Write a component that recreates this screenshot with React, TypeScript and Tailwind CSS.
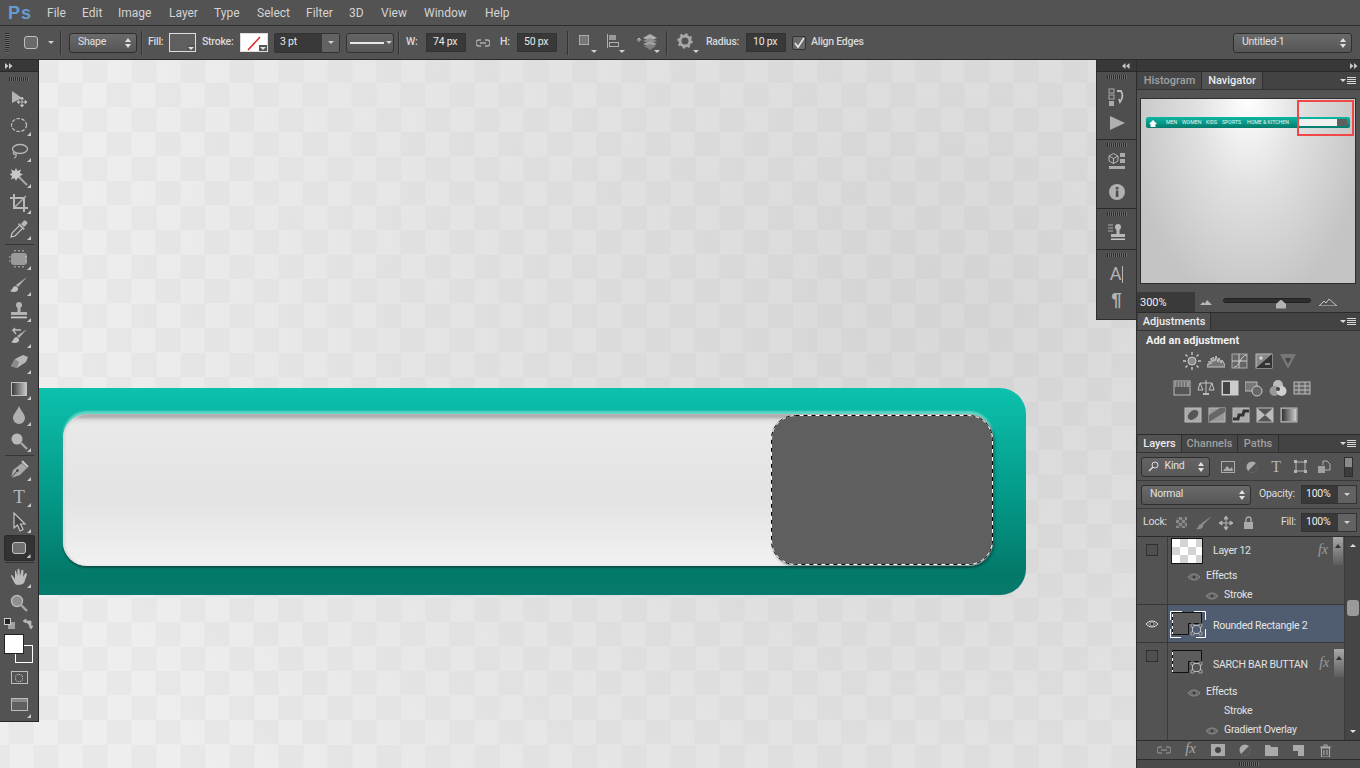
import React from "react";

const F = "#b3b3b3";

function Ic({ w = 20, h = 20, children, className = "" }: { w?: number; h?: number; children: React.ReactNode; className?: string }) {
  return (
    <svg width={w} height={h} viewBox={`0 0 ${w} ${h}`} className={"block shrink-0 " + className}>
      {children}
    </svg>
  );
}

function Grip({ w = "w-[20px]" }: { w?: string }) {
  return <div className={w + " h-[4px] bg-[repeating-linear-gradient(90deg,#2c2c2c_0_1px,#6a6a6a_1px_2px)]"} />;
}

function Caret({ className = "" }: { className?: string }) {
  return <div className={"w-0 h-0 border-x-[3px] border-x-transparent border-t-[3px] border-t-[#d0d0d0] " + className} />;
}

function UpDown() {
  return (
    <div className="flex flex-col gap-[2px]">
      <div className="w-0 h-0 border-x-[3px] border-x-transparent border-b-[4px] border-b-[#e0e0e0]" />
      <div className="w-0 h-0 border-x-[3px] border-x-transparent border-t-[4px] border-t-[#e0e0e0]" />
    </div>
  );
}

function Tool({ children, tri = true, h = "h-[26px]" }: { children: React.ReactNode; tri?: boolean; h?: string }) {
  return (
    <div className={h + " relative flex items-center justify-center w-full"}>
      {children}
      {tri && <div className="absolute right-[7px] bottom-[2px] w-[4px] h-[4px] bg-[#c8c8c8] [clip-path:polygon(100%_0,100%_100%,0_100%)]" />}
    </div>
  );
}

function Select({ label, className = "" }: { label: string; className?: string }) {
  return (
    <div className={"h-[20px] flex items-center justify-between pl-[8px] pr-[5px] rounded-[3px] border border-[#2e2e2e] bg-[linear-gradient(#6a6a6a,#565656)] text-[#e0e0e0] " + className}>
      <span>{label}</span>
      <UpDown />
    </div>
  );
}

function Num({ v, className = "" }: { v: string; className?: string }) {
  return <div className={"h-[19px] flex items-center pl-[6px] bg-[#393939] border border-[#333] text-[#e8e8e8] " + className}>{v}</div>;
}

function Sep() {
  return <div className="w-px h-[24px] bg-[#333] border-r border-r-[#5e5e5e] box-content" />;
}

function PanelMenu() {
  return (
    <div className="flex items-center gap-[1px] mr-[4px]">
      <Caret className="border-t-[#d8d8d8]" />
      <div className="w-[9px] h-[7px] bg-[repeating-linear-gradient(#d8d8d8_0_1px,transparent_1px_2px)]" />
    </div>
  );
}

function Tab({ label, active = false, className = "" }: { label: string; active?: boolean; className?: string }) {
  return (
    <div className={"h-full flex items-center justify-center border-r border-r-[#2f2f2f] font-medium text-[11px] tracking-normal " + (active ? "bg-[#535353] text-[#ececec] " : "bg-[#474747] text-[#a0a0a0] ") + className}>
      {label}
    </div>
  );
}

function TabBar({ children }: { children: React.ReactNode }) {
  return (
    <div className="h-[18px] shrink-0 flex items-stretch bg-[#434343] border-b border-b-[#333] pl-px">
      {children}
      <div className="ml-auto flex items-center"><PanelMenu /></div>
    </div>
  );
}

function Eye({ c = "#8a8a8a" }: { c?: string }) {
  return (
    <Ic w={14} h={10}>
      <path d="M1 5C4 1 10 1 13 5C10 9 4 9 1 5Z" fill="#6a6a6a" stroke={c} strokeWidth="1" />
      <circle cx="7" cy="5" r="2" fill="#3a3a3a" stroke={c} strokeWidth=".6" />
    </Ic>
  );
}

function VisBox() {
  return (
    <div className="w-[31px] h-full shrink-0 border-r border-r-[#3a3a3a] flex justify-center pt-[5px]">
      <div className="w-[12px] h-[12px] mt-[2px] border border-[#303030] bg-[#4f4f4f]" />
    </div>
  );
}

function EffectRow({ label, eye = true, indent }: { label: string; eye?: boolean; indent: string }) {
  return (
    <div className="h-[19px] flex items-center">
      <div className="w-[31px] h-full shrink-0 border-r border-r-[#3a3a3a]" />
      <div className={indent + " flex items-center"}>
        <div className="w-[14px] mr-[5px]">{eye && <Eye />}</div>
        <span className="text-[#e2e2e2]">{label}</span>
      </div>
    </div>
  );
}

function MaskThumb({ selected = false }: { selected?: boolean }) {
  return (
    <svg width="36" height="27" className="block ml-[2px] shrink-0">
      <path d="M2.5 1.5H31.5V12.5H18.5V23.5H2.5Z" fill="#5c5c5c" stroke="#111" strokeWidth="1" />
      <path d="M2.5 3V6M2.5 9V12M2.5 15V18M2.5 21V23" stroke="#fff" strokeWidth="1" />
      <rect x="22.5" y="14.5" width="8" height="8" fill="none" stroke="#bdbdbd" />
      <path d="M21 13H24V16H21ZM29 13H32V16H29ZM21 21H24V24H21ZM29 21H32V24H29Z" fill="#535353" stroke="#bdbdbd" strokeWidth=".7" />
      {selected && <path d="M.5 9V.5H12M24 .5H35.5V9M35.5 18V26.5H26M11 26.5H.5V18" fill="none" stroke="#fff" strokeWidth="1" />}
    </svg>
  );
}

function Swatch({ children, w }: { children: React.ReactNode; w: string }) {
  return <div className={w + " h-[19px] relative border border-[#ddd] overflow-hidden"}>{children}<div className="absolute right-0 bottom-0 w-[8px] h-[6px] bg-[#555] flex items-center justify-center"><Caret className="border-t-[#e0e0e0]" /></div></div>;
}

function FxBar() {
  return (
    <div className="w-[10px] h-[28px] shrink-0 bg-[linear-gradient(#a8a8a8,#5c5c5c)] flex justify-center pt-[7px]">
      <div className="w-0 h-0 border-x-[3px] border-x-transparent border-b-[4px] border-b-[#333]" />
    </div>
  );
}

function AdjBox({ children }: { children: React.ReactNode }) {
  return <Ic w={18} h={18}>{children}</Ic>;
}

function Corner() {
  return <div className="w-[8px] h-[8px] bg-[radial-gradient(#8a8a8a_40%,transparent_45%)] bg-[length:2px_2px] [clip-path:polygon(100%_0,100%_100%,0_100%)]" />;
}

function App() {
  return (
    <div className="w-[1360px] h-[768px] overflow-hidden flex flex-col bg-[#535353] text-[10.5px] tracking-[-0.25px] leading-none font-['Roboto','Noto_Sans',sans-serif] text-[#d8d8d8]">
      {/* Menu bar */}
      <div className="h-[26px] shrink-0 flex items-center border-b border-b-[#2f2f2f]">
        <span className="ml-[8px] w-[39px] text-[#669bd0] text-[18px] tracking-[1px] font-bold font-['Liberation_Sans',sans-serif]">Ps</span>
        <div className="flex text-[12px] tracking-normal text-[#d4d4d4]">
          <span className="w-[35px]">File</span>
          <span className="w-[36px]">Edit</span>
          <span className="w-[51px]">Image</span>
          <span className="w-[45px]">Layer</span>
          <span className="w-[43px]">Type</span>
          <span className="w-[49px]">Select</span>
          <span className="w-[43px]">Filter</span>
          <span className="w-[32px]">3D</span>
          <span className="w-[43px]">View</span>
          <span className="w-[61px]">Window</span>
          <span>Help</span>
        </div>
      </div>

      {/* Options bar */}
      <div className="h-[34px] shrink-0 flex items-center border-b border-b-[#2b2b2b] font-medium">
        <div className="ml-[5px] w-[4px] h-[20px] bg-[repeating-linear-gradient(#2c2c2c_0_1px,#6a6a6a_1px_2px)]" />
        <div className="ml-[15px] w-[14px] h-[13px] rounded-[3px] bg-[#6a6a6a] border border-[#c0c0c0]" />
        <Caret className="ml-[10px] mr-[6px]" />
        <Sep />
        <Select label="Shape" className="ml-[7px] w-[68px] font-normal" />
        <div className="ml-[4px]"><Sep /></div>
        <span className="ml-[5px] w-[21px]">Fill:</span>
        <Swatch w="w-[27px]"><div className="w-full h-full bg-[#5f5f5f]" /></Swatch>
        <span className="ml-[6px] w-[38px]">Stroke:</span>
        <Swatch w="w-[28px]">
          <div className="w-full h-full bg-white">
            <svg width="28" height="19"><path d="M7 16L19 3" stroke="#e02020" strokeWidth="1.5" /></svg>
          </div>
        </Swatch>
        <div className="ml-[6px] w-[66px] h-[20px] flex border border-[#333] rounded-[2px] font-normal">
          <div className="w-[47px] bg-[#393939] flex items-center pl-[5px] text-[#e8e8e8]">3 pt</div>
          <div className="flex-1 bg-[#626262] flex items-center justify-center"><Caret /></div>
        </div>
        <div className="ml-[6px] w-[48px] h-[20px] flex items-center border border-[#333] rounded-[3px] bg-[linear-gradient(#646464,#575757)] pl-[3px]">
          <div className="w-[34px] h-[2px] bg-[#e8e8e8]" />
          <Caret className="ml-[2px]" />
        </div>
        <div className="ml-[4px]"><Sep /></div>
        <span className="ml-[6px] w-[20px]">W:</span>
        <Num v="74 px" className="w-[40px] font-normal" />
        <Ic w={14} h={10} className="ml-[10px]"><path d="M5 2H3a3 3 0 0 0 0 6h2M9 2h2a3 3 0 0 1 0 6H9M4 5h6" fill="none" stroke="#b0b0b0" strokeWidth="1.3" /></Ic>
        <span className="ml-[10px] w-[17px]">H:</span>
        <Num v="50 px" className="w-[40px] font-normal" />
        <div className="ml-[10px]"><Sep /></div>
        <div className="relative ml-[9px] w-[20px] h-[20px]">
          <div className="ml-[1px] mt-[2px] w-[10px] h-[10px] border border-[#aaa] bg-[#777]" />
          <Caret className="absolute right-[1px] bottom-0" />
        </div>
        <div className="relative ml-[8px] w-[20px] h-[20px]">
          <Ic w={16} h={16}><path d="M1.5 1V15" stroke="#b0b0b0" /><rect x="3" y="2" width="7" height="5" fill="#999" /><rect x="3.5" y="9.5" width="9" height="4" fill="none" stroke="#b0b0b0" /></Ic>
          <Caret className="absolute right-[1px] bottom-0" />
        </div>
        <div className="relative ml-[10px] w-[24px] h-[20px]">
          <Ic w={22} h={18}><path d="M3 9V6M1 7.5L3 5L5 7.5" stroke="#c0c0c0" fill="none" /><path d="M7 5L14 1L21 5L14 8Z" fill="#b0b0b0" /><path d="M7 8L14 11L21 8L14 5Z" fill="#8c8c8c" /><path d="M7 11L14 14L21 11L14 8Z" fill="#a0a0a0" /><path d="M8 13L14 17L20 13L14 11Z" fill="#808080" /></Ic>
          <Caret className="absolute right-0 bottom-0" />
        </div>
        <div className="ml-[6px]"><Sep /></div>
        <div className="relative ml-[9px] w-[22px] h-[20px]">
          <Ic w={16} h={16}><circle cx="8" cy="8" r="5" fill="none" stroke="#a8a8a8" strokeWidth="3" /><circle cx="8" cy="8" r="6.6" fill="none" stroke="#a8a8a8" strokeWidth="2.4" strokeDasharray="2.2 3" /></Ic>
          <Caret className="absolute right-0 bottom-0" />
        </div>
        <span className="ml-[7px] w-[40px]">Radius:</span>
        <Num v="10 px" className="w-[40px] font-normal" />
        <div className="ml-[6px] w-[14px] h-[14px] rounded-[2px] border border-[#333] bg-[#6a6a6a] flex items-center justify-center">
          <Ic w={12} h={12}><path d="M2 6L5 10L11 1" fill="none" stroke="#e8e8e8" strokeWidth="1.6" /></Ic>
        </div>
        <span className="ml-[5px]">Align Edges</span>
        <Select label="Untitled-1" className="ml-auto mr-[8px] w-[119px] font-normal" />
      </div>

      {/* Work area */}
      <div className="flex-1 min-h-0 flex">
        <div className="relative w-[1136px] h-full overflow-hidden [background:repeating-conic-gradient(#00000006_0_25%,transparent_0_50%)_33.5px_23px/49px_49px,radial-gradient(circle_at_85%_35%,#d8d8d8,#e2e2e2_40%,#eeeeee_85%)]">
          {/* Artwork */}
          <div className="mt-[328px] w-[1026px] h-[207px] rounded-r-[26px] pl-[63px] pt-[26px] bg-[linear-gradient(#0cc1ad,#0ab8a4_12%,#049786_55%,#03796a_90%,#067a6c)]">
            <div className="w-[930px] h-[152px] rounded-[24px] flex items-center justify-end shadow-[0_-3px_2px_#5fd6c8,0_2px_2px_#0a4f47,inset_2px_0_2px_#dadada] bg-[linear-gradient(#a9a5a5,#b5b2b2_3px,#dcdcdc_6px,#e9e9e9_10px,#e3e3e3_55%,#f1f1f1)]">
              <div className="relative w-[222px] h-[150px] rounded-[24px] bg-[#5f5f5f] shadow-[2px_2px_3px_#0a4f4780]">
                <svg width="222" height="150" className="absolute inset-0">
                  <rect x=".5" y=".5" width="221" height="149" rx="24" fill="none" stroke="#fff" />
                  <rect x=".5" y=".5" width="221" height="149" rx="24" fill="none" stroke="#000" strokeDasharray="4 4" />
                </svg>
              </div>
            </div>
          </div>

          {/* Toolbox */}
          <div className="absolute left-0 top-0 w-[39px] h-[662px] flex flex-col items-center bg-[#535353] border-r border-b border-[#262626] text-[#b3b3b3]">
            <div className="w-full h-[12px] shrink-0 bg-[#383838] border-b border-b-[#2a2a2a] flex items-center pl-[5px] gap-0">
              <Ic w={8} h={6}><path d="M0 0L3.5 3L0 6ZM4 0L7.5 3L4 6Z" fill="#c8c8c8" /></Ic>
            </div>
            <div className="h-[14px] shrink-0 flex items-center"><Grip /></div>
            <Tool tri={false}><Ic><path d="M3 2L13 9L3 14Z" fill={F} /><path d="M13 9V17M9 13H17M13 8L11.5 10H14.5ZM13 18L11.5 16H14.5ZM8 13L10 11.5V14.5ZM18 13L16 11.5V14.5Z" stroke="#c8c8c8" strokeWidth=".8" fill="#c8c8c8" /></Ic></Tool>
            <Tool><Ic><ellipse cx="10" cy="10" rx="7.5" ry="6.5" fill="none" stroke="#c0c0c0" strokeWidth="1.2" strokeDasharray="3.5 1.5" /></Ic></Tool>
            <Tool><Ic><ellipse cx="11" cy="8" rx="7.5" ry="4.5" fill="none" stroke="#b8b8b8" strokeWidth="1.3" /><path d="M5 11C3 13 6 14 7 13C8 15 6 17 5 17" fill="none" stroke="#b8b8b8" strokeWidth="1.2" /></Ic></Tool>
            <Tool><Ic><path d="M7 1L8.5 4L12 2.5L10.8 6L14 7.5L10.8 9L12 12L8.5 11L7 14L5.5 11L2 12.5L3.2 9L0.5 7.5L3.2 6L2 2.5L5.5 4Z" fill="#c8c8c8" /><path d="M10 10L18 18" stroke="#a8a8a8" strokeWidth="2" /></Ic></Tool>
            <Tool><Ic><path d="M5 1V15H19M1 5H15V19" fill="none" stroke="#b8b8b8" strokeWidth="2" /><path d="M6 14L17 3" stroke="#b8b8b8" strokeWidth="1.2" /></Ic></Tool>
            <Tool><Ic><path d="M2 18L3 14L11 6L14 9L6 17Z" fill="#555" stroke="#c8c8c8" strokeWidth="1.1" /><path d="M10 4L16 10L14.5 11L9 5.5ZM12 5L15 1.5Q18 1 18.5 4.5L15 8Z" fill="#b8b8b8" /></Ic></Tool>
            <div className="h-[4px] w-full flex items-center justify-center shrink-0"><div className="w-[29px] h-px bg-[#363636]" /></div>
            <Tool><Ic><rect x="2" y="4" width="16" height="12" rx="3" fill="#9a9a9a" /><path d="M6 1V19M10 1V19M14 1V19M0 8H20M0 12H20" stroke="#c8c8c8" strokeDasharray="1.5 14.5" strokeWidth="1.2" /></Ic></Tool>
            <Tool><Ic><path d="M18 2L9 12L7 10Z" fill="#b4b4b4" /><path d="M7 11C3 11 4 15 1 16C4 18 10 17 9 13Z" fill="#c0c0c0" /></Ic></Tool>
            <Tool><Ic><circle cx="10" cy="4" r="3" fill="#b4b4b4" /><rect x="8.5" y="6" width="3" height="5" fill="#b4b4b4" /><rect x="2" y="11" width="16" height="3" fill="#b4b4b4" /><rect x="2" y="15.5" width="16" height="1.8" fill="#c8c8c8" /></Ic></Tool>
            <Tool><Ic><path d="M18 2L10 11L8 9Z" fill="#b4b4b4" /><path d="M8 10C4 10 5 14 2 15C5 17 11 16 10 12Z" fill="#c0c0c0" /><path d="M12 3H4L6 1M4 3L7 7" fill="none" stroke="#c0c0c0" strokeWidth="1.3" /></Ic></Tool>
            <Tool><Ic><path d="M6 6L14 2L19 4L17 9L8 15L2 13Z" fill="#b8b8b8" /><path d="M2 13L6 6L10 9L8 15Z" fill="#8a8a8a" /></Ic></Tool>
            <Tool><div className="w-[16px] h-[14px] border border-[#c0c0c0] bg-[linear-gradient(90deg,#3c3c3c,#c4c4c4)]" /></Tool>
            <Tool><Ic><path d="M10 1C12 6 16 9 16 13A6 6 0 0 1 4 13C4 9 8 6 10 1Z" fill="#b0b0b0" /></Ic></Tool>
            <Tool><Ic><circle cx="8" cy="8" r="5.5" fill="#b8b8b8" /><path d="M12 12L18 18" stroke="#a8a8a8" strokeWidth="2.4" /></Ic></Tool>
            <div className="h-[3px] w-full flex items-center justify-center shrink-0"><div className="w-[29px] h-px bg-[#363636]" /></div>
            <Tool><Ic><path d="M2 18L4 10L13 3L18 8L11 15Z" fill="#a8a8a8" /><path d="M2 18L8 11" stroke="#444" strokeWidth="1" /><circle cx="8.5" cy="10.5" r="1.3" fill="#444" /><path d="M13 1L19 7" stroke="#c8c8c8" strokeWidth="2" /></Ic></Tool>
            <Tool><span className="text-[19px] text-[#b8b8b8] font-['Liberation_Serif',serif]">T</span></Tool>
            <Tool><Ic><path d="M5 1V16L8.5 13L11 19L14 17.5L11.5 12L16 12Z" fill="#444" stroke="#c4c4c4" strokeWidth="1.2" /></Ic></Tool>
            <div className="h-[26px] w-[31px] shrink-0 relative flex items-center justify-center rounded-[2px] bg-[#333] border border-[#2c2c2c]">
              <div className="w-[14px] h-[12px] rounded-[3px] bg-[#6e6e6e] border border-[#c4c4c4]" />
              <div className="absolute right-[3px] bottom-[2px] w-[4px] h-[4px] bg-[#c8c8c8] [clip-path:polygon(100%_0,100%_100%,0_100%)]" />
            </div>
            <div className="h-[3px] w-full flex items-center justify-center shrink-0"><div className="w-[29px] h-px bg-[#363636]" /></div>
            <Tool><Ic><path d="M3 8L6 12V4.5Q6 3 7 4L8.5 9V2.5Q9.5 1 10.5 2.5L11 9L12.5 3Q14 2 14.5 4L14 10L16.5 6Q18 6 18 7.5L15 16Q13 18 9 18Q6 18 5 15L2 9Q2 7.5 3 8Z" fill="#bcbcbc" /></Ic></Tool>
            <Tool tri={false}><Ic><circle cx="8" cy="8" r="5.5" fill="#8f8f8f" stroke="#b8b8b8" strokeWidth="1.4" /><path d="M12 12L18 18" stroke="#a8a8a8" strokeWidth="2.4" /></Ic></Tool>
            <div className="h-[14px] w-full flex items-center justify-between px-[4px] shrink-0">
              <Ic w={11} h={11}><rect x="4" y="4" width="7" height="7" fill="#a0a0a0" /><rect x=".5" y=".5" width="6" height="6" fill="#222" stroke="#ccc" /></Ic>
              <Ic w={11} h={11}><path d="M2 3H8V9M0 3L3 1V5ZM8 11L6 8H10Z" fill="#bbb" stroke="#bbb" strokeWidth=".7" /></Ic>
            </div>
            <div className="relative w-full h-[35px] shrink-0">
              <div className="absolute left-[15px] top-[15px] w-[18px] h-[18px] bg-[#535353] border border-white" />
              <div className="absolute left-[4px] top-[4px] w-[20px] h-[20px] bg-white border border-[#222]" />
            </div>
            <div className="h-[21px] flex items-center shrink-0 mt-[2px]">
              <div className="w-[17px] h-[13px] border border-[#bdbdbd] flex items-center justify-center">
                <div className="w-[8px] h-[8px] rounded-full border border-dotted border-[#ddd]" />
              </div>
            </div>
            <Tool h="h-[32px]"><div className="w-[17px] h-[13px] border border-[#bdbdbd] bg-[linear-gradient(#8a8a8a_30%,#5f5f5f_30%)]" /></Tool>
          </div>

          {/* Floating dock column */}
          <div className="absolute right-0 top-0 w-[40px] h-[260px] flex flex-col items-center bg-[#4e4e4e] border-l border-[#2e2e2e] border-b">
            <div className="w-full h-[12px] shrink-0 bg-[#383838] border-b border-b-[#2a2a2a] flex items-center justify-end pr-[6px]">
              <Ic w={8} h={6}><path d="M3.5 0L0 3L3.5 6ZM7.5 0L4 3L7.5 6Z" fill="#c8c8c8" /></Ic>
            </div>
            <div className="w-full h-[68px] shrink-0 flex flex-col items-center border-b border-[#2a2a2a] pt-[3px]">
              <Grip />
              <div className="mt-[9px]"><Ic w={20} h={18}><rect x="2" y="1" width="5" height="4" fill="none" stroke="#aaa" /><rect x="2" y="7" width="5" height="4" fill="none" stroke="#aaa" /><rect x="2" y="13" width="5" height="5" fill="#aaa" /><path d="M10 3H14C16 6 16 10 13 14L12 11" fill="none" stroke="#bbb" strokeWidth="1.8" /></Ic></div>
              <div className="mt-[9px]"><Ic w={18} h={16}><path d="M2 1L17 8L2 15Z" fill="#b0b0b0" /></Ic></div>
            </div>
            <div className="w-full h-[69px] shrink-0 flex flex-col items-center border-b border-[#2a2a2a] pt-[3px]">
              <Grip />
              <div className="mt-[5px]"><Ic w={18} h={20}><path d="M1 4L5.5 1.5L10 4V9L5.5 11.5L1 9ZM1 4L5.5 6.5L10 4M5.5 6.5V11.5" fill="none" stroke="#b8b8b8" /><rect x="12" y="1" width="5" height="4" fill="#aaa" /><rect x="12" y="7" width="5" height="4" fill="#aaa" /><rect x="1" y="14" width="16" height="3" fill="#aaa" /></Ic></div>
              <div className="mt-[11px]"><Ic w={18} h={18}><circle cx="9" cy="9" r="8" fill="#b0b0b0" /><rect x="7.8" y="7.5" width="2.6" height="6.5" fill="#4e4e4e" /><rect x="7.8" y="4" width="2.6" height="2.5" fill="#4e4e4e" /></Ic></div>
            </div>
            <div className="w-full h-[41px] shrink-0 flex flex-col items-center border-b border-[#2a2a2a] pt-[3px]">
              <Grip />
              <div className="mt-[7px]"><Ic w={20} h={20}><path d="M1 2H6M1 5H6M1 8H6" stroke="#aaa" strokeWidth="1.2" /><circle cx="11" cy="4" r="3" fill="#b8b8b8" /><rect x="9.5" y="6" width="3" height="5" fill="#b8b8b8" /><rect x="4" y="11" width="14" height="3" fill="#b8b8b8" /><rect x="4" y="15.5" width="14" height="1.5" fill="#c8c8c8" /></Ic></div>
            </div>
            <div className="w-full flex-1 flex flex-col items-center pt-[3px]">
              <Grip />
              <div className="mt-[6px] flex items-end h-[20px] text-[#b4b4b4] text-[18px]">A<span className="w-px h-[17px] bg-[#b4b4b4] ml-px" /></div>
              <div className="mt-[7px] text-[#b4b4b4] text-[19px] font-bold font-['Liberation_Sans',sans-serif]">¶</div>
            </div>
          </div>
        </div>

        {/* Right panels */}
        <div className="w-[224px] h-full shrink-0 flex flex-col border-l border-l-[#2e2e2e] text-[#e0e0e0]">
          <div className="h-[12px] shrink-0 bg-[#383838] border-b border-b-[#2a2a2a] flex items-center justify-end pr-[2px]">
            <Ic w={8} h={6}><path d="M0 0L3.5 3L0 6ZM4 0L7.5 3L4 6Z" fill="#c8c8c8" /></Ic>
          </div>
          {/* Navigator */}
          <div className="h-[241px] shrink-0 flex flex-col border-b border-b-[#2b2b2b]">
            <TabBar>
              <Tab label="Histogram" className="w-[64px]" />
              <Tab label="Navigator" active className="w-[61px]" />
            </TabBar>
            <div className="flex-1 px-[3px] pt-[8px]">
              <div className="relative w-[216px] h-[186px] border border-[#2e2e2e] pt-[18px] px-[5px] bg-[radial-gradient(ellipse_at_50%_0%,#ffffff,#e0e0e0_35%,#c4c4c4_80%)]">
                <div className="h-[11px] rounded-[2px] flex items-center pl-[3px] pr-[3px] bg-[linear-gradient(#0bb8a4,#047a6c)] text-[#e8f4f2] text-[5.2px] tracking-normal whitespace-nowrap">
                  <Ic w={8} h={8}><path d="M4 1L8 5H6.5V8H1.5V5H0Z" fill="#fff" /></Ic>
                  <span className="ml-[9px] w-[16px]">MEN</span>
                  <span className="w-[24px]">WOMEN</span>
                  <span className="w-[16px]">KIDS</span>
                  <span className="w-[25px]">SPORTS</span>
                  <span>HOME &amp; KITCHEN</span>
                  <div className="ml-auto w-[48px] h-[7px] rounded-[1px] bg-[linear-gradient(90deg,#f0f0f0_79%,#5f5f5f_79%)]" />
                </div>
                <div className="absolute left-[156px] top-[1px] w-[57px] h-[36px] border-2 border-[#f04848]" />
              </div>
            </div>
            <div className="h-[20px] shrink-0 flex items-center">
              <div className="w-[58px] h-full bg-[#3a3a3a] flex items-center pl-[3px] text-[#f0f0f0] text-[11px] tracking-normal">300%</div>
              <Ic w={12} h={6} className="ml-[5px]"><path d="M0 6L3 3L5 4.5L7 1L12 6Z" fill="#b8b8b8" /></Ic>
              <div className="relative ml-[11px] mb-[4px] w-[88px] h-[5px] rounded-[3px] bg-[#2e2e2e] border border-[#222]">
                <div className="absolute left-[52px] top-[1px] w-[10px] h-[9px] bg-[#b4b4b4] [clip-path:polygon(50%_0,100%_50%,100%_100%,0_100%,0_50%)]" />
              </div>
              <Ic w={18} h={8} className="ml-[8px]"><path d="M0 8L5 3L7 5L10 1L18 8Z" fill="none" stroke="#c8c8c8" /></Ic>
              <div className="ml-auto mr-[2px] mt-[6px]"><Corner /></div>
            </div>
          </div>

          {/* Adjustments */}
          <div className="h-[122px] shrink-0 flex flex-col border-b border-b-[#2b2b2b]">
            <TabBar><Tab label="Adjustments" active className="w-[73px]" /></TabBar>
            <div className="pl-[9px] pt-[4px] font-bold text-[11px] tracking-normal text-[#f0f0f0]">Add an adjustment</div>
            <div className="flex flex-col items-center gap-[9px] mt-[6px]">
              <div className="flex gap-[6px] mr-[17px]">
                <AdjBox><circle cx="9" cy="9" r="4" fill="#888" stroke="#ccc" /><path d="M9 0V3M9 15V18M0 9H3M15 9H18M2.5 2.5L4.5 4.5M13.5 13.5L15.5 15.5M2.5 15.5L4.5 13.5M13.5 4.5L15.5 2.5" stroke="#c8c8c8" strokeWidth="1.4" /></AdjBox>
                <AdjBox><path d="M0 15V12L2 13V9L4 12V6L6 10V5L8 9L9 4L11 10L12 6L14 11L15 8L18 13V15Z" fill="#777" stroke="#c4c4c4" strokeWidth="1" /></AdjBox>
                <AdjBox><rect x="1" y="2" width="15" height="14" fill="#666" stroke="#aaa" /><path d="M1 9H16M8 2V16M3 15C9 15 9 3 16 3" fill="none" stroke="#ccc" /></AdjBox>
                <AdjBox><rect x="1" y="2" width="16" height="14" fill="#888" stroke="#bbb" /><path d="M1 16L17 2V16Z" fill="#333" /><path d="M4 6H8M6 4V8M10 12H15" stroke="#eee" /></AdjBox>
                <AdjBox><path d="M1 2H17L9 17Z" fill="#777" /><path d="M6 6H12L9 12Z" fill="#444" /></AdjBox>
              </div>
              <div className="flex gap-[6px] mr-[14px]">
                <AdjBox><rect x="1" y="2" width="16" height="14" fill="#555" stroke="#bbb" /><rect x="2" y="3" width="14" height="5" fill="#999" /><path d="M4 3V8M7 3V8M10 3V8M13 3V8" stroke="#555" /></AdjBox>
                <AdjBox><path d="M9 1V15M3 4H15M3 4L1 11H6ZM15 4L12 11H17Z" fill="none" stroke="#c4c4c4" /><rect x="6" y="14" width="6" height="2" fill="#bbb" /></AdjBox>
                <AdjBox><rect x="1" y="2" width="16" height="14" fill="#ccc" stroke="#ccc" /><rect x="2" y="3" width="7" height="12" fill="#444" /></AdjBox>
                <AdjBox><rect x="0" y="3" width="12" height="9" fill="#777" stroke="#bbb" /><circle cx="12" cy="12" r="5" fill="#666" stroke="#ccc" /></AdjBox>
                <AdjBox><circle cx="9" cy="6" r="5" fill="#bbb" /><circle cx="5.5" cy="12" r="5" fill="#999" /><circle cx="12.5" cy="12" r="5" fill="#d0d0d0" /><circle cx="9" cy="10" r="2" fill="#444" /></AdjBox>
                <AdjBox><rect x="1" y="3" width="16" height="12" fill="#666" stroke="#bbb" /><path d="M1 7H17M1 11H17M6 3V15M12 3V15" stroke="#bbb" /></AdjBox>
              </div>
              <div className="flex gap-[6px] mr-[16px]">
                <AdjBox><rect x="1" y="2" width="16" height="14" fill="#aaa" stroke="#bbb" /><ellipse cx="9" cy="9" rx="6" ry="4" transform="rotate(-40 9 9)" fill="#555" /></AdjBox>
                <AdjBox><rect x="1" y="2" width="16" height="14" fill="#999" stroke="#bbb" /><path d="M1 16L17 6V2H12L1 9Z" fill="#666" /></AdjBox>
                <AdjBox><rect x="1" y="2" width="16" height="14" fill="#aaa" stroke="#bbb" /><path d="M1 13L6 13L7 9H11L12 5H17" stroke="#333" strokeWidth="3" fill="none" /></AdjBox>
                <AdjBox><rect x="1" y="2" width="16" height="14" fill="#555" stroke="#bbb" /><path d="M1 2L9 9L1 16ZM17 2L9 9L17 16Z" fill="#bbb" /></AdjBox>
                <AdjBox><rect x="1" y="2" width="16" height="14" fill="#888" stroke="#bbb" /><rect x="2" y="3" width="14" height="12" fill="url(#ag)" /><defs><linearGradient id="ag"><stop offset="0" stopColor="#333" /><stop offset="1" stopColor="#ccc" /></linearGradient></defs></AdjBox>
              </div>
            </div>
          </div>

          {/* Layers */}
          <div className="flex-1 min-h-0 flex flex-col">
            <TabBar>
              <Tab label="Layers" active className="w-[44px]" />
              <Tab label="Channels" className="w-[56px]" />
              <Tab label="Paths" className="w-[41px]" />
            </TabBar>
            <div className="h-[28px] shrink-0 flex items-center pl-[4px] border-b border-b-[#3a3a3a]">
              <div className="w-[70px] h-[20px] flex items-center justify-between pl-[6px] pr-[5px] rounded-[3px] border border-[#2e2e2e] bg-[linear-gradient(#646464,#585858)] text-[#e0e0e0]">
                <Ic w={11} h={11}><circle cx="7" cy="4" r="3" fill="none" stroke="#ddd" /><path d="M5 6L1 10" stroke="#ddd" strokeWidth="1.4" /></Ic>
                <span className="mr-[8px]">Kind</span>
                <UpDown />
              </div>
              <div className="flex items-center ml-[6px]">
                <div className="w-[24px] flex justify-center"><Ic w={14} h={12}><rect x=".5" y=".5" width="13" height="11" fill="#555" stroke="#aaa" /><path d="M2 10L6 5L9 8L11 6L12 10Z" fill="#aaa" /></Ic></div>
                <div className="w-[24px] flex justify-center"><Ic w={12} h={12}><circle cx="6" cy="6" r="5.5" fill="#aaa" /><path d="M10 2L2 10A5.5 5.5 0 0 0 10 2Z" fill="#555" /></Ic></div>
                <div className="w-[24px] flex justify-center text-[16px] text-[#b4b4b4] font-['Liberation_Serif',serif]">T</div>
                <div className="w-[24px] flex justify-center"><Ic w={13} h={13}><rect x="2" y="2" width="9" height="9" fill="none" stroke="#b4b4b4" /><path d="M0 0H3V3H0ZM10 0H13V3H10ZM0 10H3V13H0ZM10 10H13V13H10Z" fill="#b4b4b4" /></Ic></div>
                <div className="w-[24px] flex justify-center"><Ic w={13} h={13}><path d="M5 5V1H9L12 4V10H7" fill="none" stroke="#b4b4b4" /><rect x="0" y="6" width="7" height="7" fill="#a0a0a0" /></Ic></div>
                <div className="w-[24px] flex justify-center"><div className="w-[9px] h-[20px] border border-[#2e2e2e] bg-[linear-gradient(#8a8a8a_50%,#3c3c3c_50%)]" /></div>
              </div>
            </div>
            <div className="h-[28px] shrink-0 flex items-center pl-[4px] border-b border-b-[#3a3a3a]">
              <Select label="Normal" className="w-[110px]" />
              <span className="ml-[8px] w-[42px] text-[#dcdcdc]">Opacity:</span>
              <div className="w-[56px] h-[19px] flex border border-[#333]">
                <div className="w-[36px] bg-[#393939] flex items-center pl-[4px] text-[#eee]">100%</div>
                <div className="flex-1 bg-[#626262] flex items-center justify-center"><Caret /></div>
              </div>
            </div>
            <div className="h-[28px] shrink-0 flex items-center pl-[6px] border-b border-b-[#2c2c2c]">
              <span className="w-[33px] text-[#dcdcdc]">Lock:</span>
              <div className="w-[11px] h-[11px] bg-[conic-gradient(#8a8a8a_25%,#5e5e5e_0_50%,#8a8a8a_0_75%,#5e5e5e_0)] bg-[length:6px_6px]" />
              <Ic w={17} h={14} className="ml-[9px]"><path d="M16 0L7 9L5 7.5ZM5 8C2 8 3 12 0 13C4 14 8 12 7 9Z" fill="#8c8c8c" /></Ic>
              <Ic w={14} h={14} className="ml-[6px]"><path d="M7 0V14M0 7H14M7 0L5 3H9ZM7 14L5 11H9ZM0 7L3 5V9ZM14 7L11 5V9Z" stroke="#b0b0b0" fill="#b0b0b0" /></Ic>
              <Ic w={11} h={13} className="ml-[10px]"><rect x="1" y="6" width="9" height="7" fill="#aaa" /><path d="M3 6V3.5a2.5 2.5 0 0 1 5 0V6" fill="none" stroke="#aaa" strokeWidth="1.4" /></Ic>
              <span className="ml-[27px] w-[20px] text-[#dcdcdc]">Fill:</span>
              <div className="w-[56px] h-[19px] flex border border-[#333]">
                <div className="w-[36px] bg-[#393939] flex items-center pl-[4px] text-[#eee]">100%</div>
                <div className="flex-1 bg-[#626262] flex items-center justify-center"><Caret /></div>
              </div>
            </div>

            <div className="flex-1 min-h-0 flex overflow-hidden">
              <div className="flex-1 min-w-0 flex flex-col">
                <div className="h-[68px] shrink-0 border-b border-b-[#363636]">
                  <div className="h-[30px] flex">
                    <VisBox />
                    <div className="ml-[3px] mt-px w-[32px] h-[26px] border border-[#111] bg-[conic-gradient(#d4d4d4_25%,#fff_0_50%,#d4d4d4_0_75%,#fff_0)] bg-[length:16px_16px]" />
                    <span className="ml-[10px] mt-[9px] text-[#e2e2e2] w-[105px] whitespace-nowrap">Layer 12</span>
                    <span className="mt-[6px] w-[15px] italic text-[14px] text-[#9c9c9c] font-['Liberation_Serif',serif]">fx</span>
                    <FxBar />
                  </div>
                  <EffectRow label="Effects" indent="ml-[19px]" />
                  <EffectRow label="Stroke" indent="ml-[37px]" />
                </div>
                <div className="h-[38px] shrink-0 flex bg-[#505c70] border-b border-b-[#363636]">
                  <div className="w-[31px] h-full shrink-0 bg-[#535353] border-r border-r-[#3a3a3a] flex items-center justify-center"><Eye c="#d8d8d8" /></div>
                  <div className="mt-[6px]"><MaskThumb selected /></div>
                  <span className="ml-[7px] mt-[16px] text-[#e6e6e6] whitespace-nowrap">Rounded Rectangle 2</span>
                </div>
                <div className="h-[97px] shrink-0">
                  <div className="h-[40px] flex">
                    <VisBox />
                    <div className="mt-[6px]"><MaskThumb /></div>
                    <span className="ml-[7px] mt-[17px] text-[#e2e2e2] w-[108px] whitespace-nowrap">SARCH BAR BUTTAN</span>
                    <span className="mt-[13px] w-[15px] italic text-[14px] text-[#9c9c9c] font-['Liberation_Serif',serif]">fx</span>
                    <div className="h-[28px] mt-[6px]"><FxBar /></div>
                  </div>
                  <EffectRow label="Effects" indent="ml-[19px]" />
                  <EffectRow label="Stroke" eye={false} indent="ml-[37px]" />
                  <EffectRow label="Gradient Overlay" indent="ml-[37px]" />
                </div>
              </div>
              <div className="w-[16px] shrink-0 bg-[#454545] flex flex-col items-center border-l border-l-[#3a3a3a]">
                <div className="mt-[7px] w-0 h-0 border-x-[3px] border-x-transparent border-b-[3px] border-b-[#e0e0e0]" />
                <div className="mt-[53px] w-[12px] h-[16px] rounded-[3px] bg-[#9a9a9a]" />
                <div className="mt-auto mb-[7px] w-0 h-0 border-x-[3px] border-x-transparent border-t-[3px] border-t-[#e0e0e0]" />
              </div>
            </div>

            <div className="h-[19px] shrink-0 flex items-center border-t border-t-[#2c2c2c] text-[#a8a8a8]">
              <div className="ml-[13px] w-[27px] flex justify-center"><Ic w={14} h={10}><path d="M5 2H3a3 3 0 0 0 0 6h2M9 2h2a3 3 0 0 1 0 6H9M4 5h6" fill="none" stroke="#888" strokeWidth="1.3" /></Ic></div>
              <div className="w-[27px] flex justify-center italic text-[15px] font-['Liberation_Serif',serif] -mt-[3px]">fx</div>
              <div className="w-[27px] flex justify-center"><Ic w={14} h={12}><rect width="14" height="12" fill="#aaa" /><circle cx="7" cy="6" r="3" fill="#444" /></Ic></div>
              <div className="w-[27px] flex justify-center"><Ic w={12} h={12}><circle cx="6" cy="6" r="5.5" fill="#aaa" /><path d="M10 2L2 10A5.5 5.5 0 0 0 10 2Z" fill="#555" /></Ic></div>
              <div className="w-[27px] flex justify-center"><Ic w={13} h={11}><path d="M0 0H5L6 2H13V11H0Z" fill="#aaa" /></Ic></div>
              <div className="w-[27px] flex justify-center"><Ic w={11} h={11}><path d="M0 0H11V11H5V6H0Z" fill="#aaa" /></Ic></div>
              <div className="w-[27px] flex justify-center"><Ic w={11} h={13}><path d="M0 3H11M4 3V1H7V3M1.5 4H9.5V13H1.5ZM4 6V11M7 6V11" fill="none" stroke="#aaa" strokeWidth="1.1" /></Ic></div>
              <div className="ml-auto mr-[2px] mt-[6px]"><Corner /></div>
            </div>
            <div className="h-[9px] shrink-0 bg-[#4a4a4a] border-t border-t-[#2c2c2c] flex items-center justify-center"><Grip /></div>
          </div>
        </div>
      </div>
    </div>
  );
}

export default App;
